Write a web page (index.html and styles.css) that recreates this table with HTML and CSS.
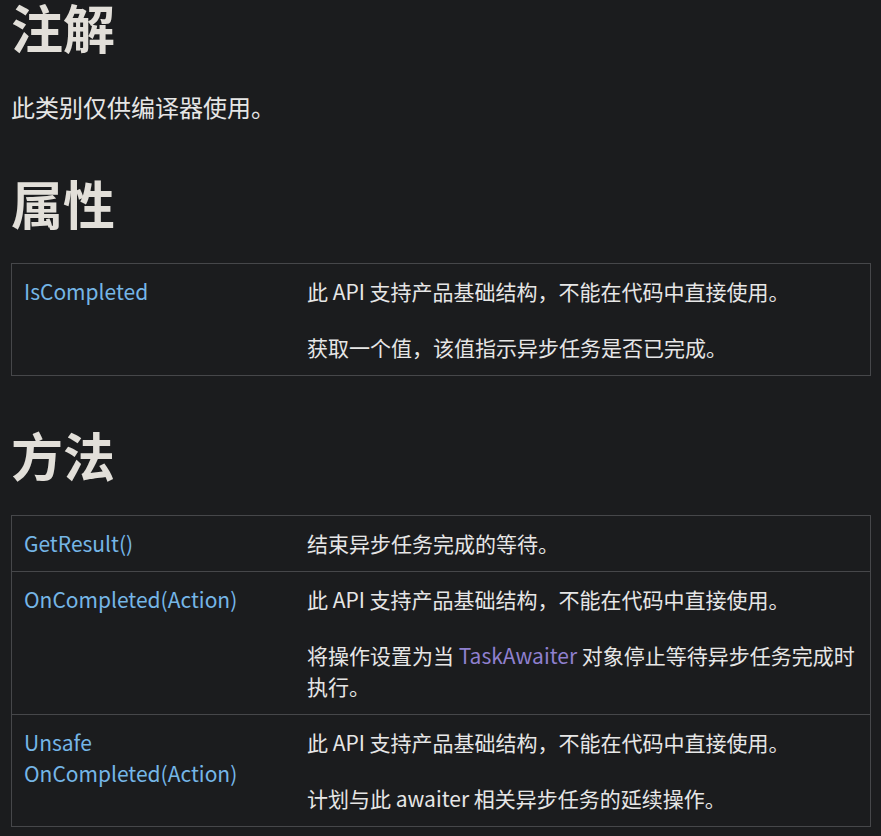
FILE: index.html
```html
<!DOCTYPE html>
<html lang="zh-CN">
<head>
    <meta charset="UTF-8">
    <meta name="viewport" content="width=device-width, initial-scale=1.0">
    <title>TaskAwaiter 结构</title>
    <link rel="stylesheet" href="styles.css">
</head>
<body>
    <div class="content">
        <h2>注解</h2>
        <p>此类别仅供编译器使用。</p>

        <h2>属性</h2>
        <table class="members">
            <tr>
                <td class="name"><a href="#">IsCompleted</a></td>
                <td class="desc">
                    <p>此 API 支持产品基础结构，不能在代码中直接使用。</p>
                    <p>获取一个值，该值指示异步任务是否已完成。</p>
                </td>
            </tr>
        </table>

        <h2>方法</h2>
        <table class="members">
            <tr>
                <td class="name"><a href="#">GetResult()</a></td>
                <td class="desc">
                    <p>结束异步任务完成的等待。</p>
                </td>
            </tr>
            <tr>
                <td class="name"><a href="#">OnCompleted(Action)</a></td>
                <td class="desc">
                    <p>此 API 支持产品基础结构，不能在代码中直接使用。</p>
                    <p>将操作设置为当 <a href="#" class="visited">TaskAwaiter</a> 对象停止等待异步任务完成时执行。</p>
                </td>
            </tr>
            <tr>
                <td class="name"><a href="#">Unsafe<br>OnCompleted(Action)</a></td>
                <td class="desc">
                    <p>此 API 支持产品基础结构，不能在代码中直接使用。</p>
                    <p>计划与此 awaiter 相关异步任务的延续操作。</p>
                </td>
            </tr>
        </table>
    </div>
</body>
</html>
```

FILE: styles.css
```css
body {
    margin: 0;
    background-color: #1b1c1e;
    color: #e6e6e6;
    font-family: "Segoe UI", "Noto Sans CJK SC", sans-serif;
    font-size: 24px;
    line-height: 34px;
}
.content {
    padding: 0 10px 0 11px;
}
h2 {
    margin: 52px 0 25px 0;
    padding-bottom: 8px;
    font-size: 52px;
    line-height: 54px;
    font-weight: bold;
    color: #e2dfd9;
}
h2:first-child {
    margin-top: 0;
}
p {
    margin: 28px 0;
}
a {
    color: #75b6e7;
    text-decoration: none;
}
a.visited {
    color: #8f80cf;
}
.members {
    width: 100%;
    border-collapse: collapse;
    border: 1px solid #46474a;
    font-size: 21px;
    line-height: 31px;
}
.members tr + tr td {
    border-top: 1px solid #46474a;
}
.members td {
    padding: 12px;
    vertical-align: top;
}
.members td.name {
    width: 33%;
}
.members td p {
    margin: 0 0 25px 0;
}
.members td p:last-child {
    margin-bottom: 0;
}
```
